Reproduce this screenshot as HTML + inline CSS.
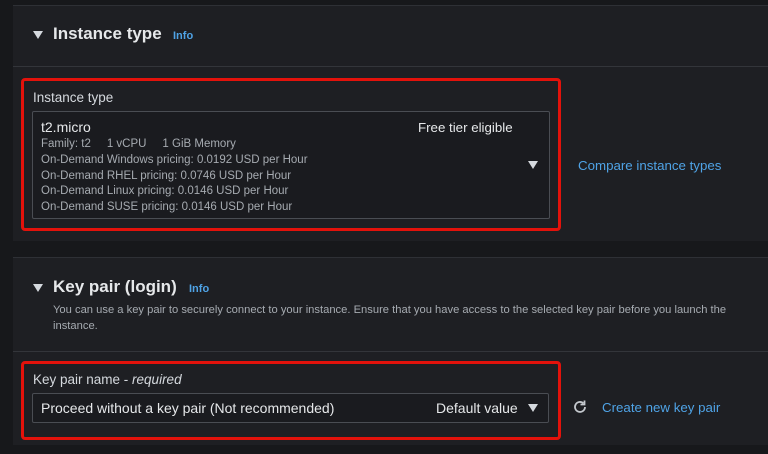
<!DOCTYPE html>
<html><head><meta charset="utf-8"><style>
*{margin:0;padding:0;box-sizing:border-box}
body{width:768px;height:454px;background:#17181b;font-family:"Liberation Sans",sans-serif;position:relative;overflow:hidden;color:#d5d9de}
.p{position:absolute;left:13px;right:0;background:#1e1f23;border-top:1px solid #2e3035}
.a{position:absolute;white-space:nowrap}
.h{font-size:17px;font-weight:bold;color:#e6e8ea}
.info{font-size:11px;font-weight:bold;color:#4fa3e6}
.tri{width:0;height:0;border-left:5px solid transparent;border-right:5px solid transparent;border-top:8px solid #d5d9de}
.red{position:absolute;border:3px solid #e3120b;border-radius:4px}
.sel{position:absolute;border:1px solid #4a4d53;border-radius:2px;background:#1a1b1f}
.s{font-size:11.5px;color:#a6abb1;line-height:15.8px}
.link{color:#4fa3e6;font-size:13.3px}
</style></head><body>
<div class="p" style="top:5px;height:236px"></div>
<div class="a" style="left:13px;right:0;top:66px;border-top:1px solid #33353a"></div>
<div class="a tri" style="left:33px;top:31px"></div>
<div class="a h" style="left:53px;top:24px">Instance type</div>
<div class="a info" style="left:173px;top:30px">Info</div>
<div class="red" style="left:21px;top:78px;width:540px;height:153px"></div>
<div class="a" style="left:33px;top:90px;font-size:13.5px;color:#d5d9de">Instance type</div>
<div class="sel" style="left:32px;top:111px;width:518px;height:108px"></div>
<div class="a" style="left:41px;top:119px;font-size:14px;color:#e6e8ea">t2.micro</div>
<div class="a" style="left:418px;top:120px;font-size:13.3px;color:#e6e8ea">Free tier eligible</div>
<div class="a s" style="left:41px;top:137px">Family: t2&nbsp;&nbsp;&nbsp;&nbsp; 1 vCPU&nbsp;&nbsp;&nbsp;&nbsp; 1 GiB Memory<br>On-Demand Windows pricing: 0.0192 USD per Hour<br>On-Demand RHEL pricing: 0.0746 USD per Hour<br>On-Demand Linux pricing: 0.0146 USD per Hour<br>On-Demand SUSE pricing: 0.0146 USD per Hour</div>
<div class="a tri" style="left:528px;top:161px"></div>
<div class="a link" style="left:578px;top:158px">Compare instance types</div>

<div class="p" style="top:257px;height:188px"></div>
<div class="a" style="left:13px;right:0;top:351px;border-top:1px solid #33353a"></div>
<div class="a tri" style="left:33px;top:284px"></div>
<div class="a h" style="left:53px;top:277px">Key pair (login)</div>
<div class="a info" style="left:189px;top:283px">Info</div>
<div class="a" style="left:53px;top:302px;font-size:11.2px;color:#a6abb1;line-height:16px;width:690px;white-space:normal">You can use a key pair to securely connect to your instance. Ensure that you have access to the selected key pair before you launch the instance.</div>
<div class="red" style="left:21px;top:361px;width:540px;height:79px"></div>
<div class="a" style="left:33px;top:372px;font-size:13.5px;color:#d5d9de">Key pair name - <i>required</i></div>
<div class="sel" style="left:32px;top:393px;width:517px;height:30px"></div>
<div class="a" style="left:41px;top:400px;font-size:14px;color:#e6e8ea">Proceed without a key pair (Not recommended)</div>
<div class="a" style="left:436px;top:400px;font-size:14px;color:#e6e8ea">Default value</div>
<div class="a tri" style="left:528px;top:404px"></div>
<svg class="a" style="left:572px;top:399px" width="16" height="16" viewBox="0 0 16 16"><path d="M13 8a5 5 0 1 1-1.6-3.7" fill="none" stroke="#c5c9ce" stroke-width="1.8"/><path d="M12.5 1.5v4h-4" fill="none" stroke="#c5c9ce" stroke-width="1.8"/></svg>
<div class="a link" style="left:602px;top:400px">Create new key pair</div>
</body></html>
